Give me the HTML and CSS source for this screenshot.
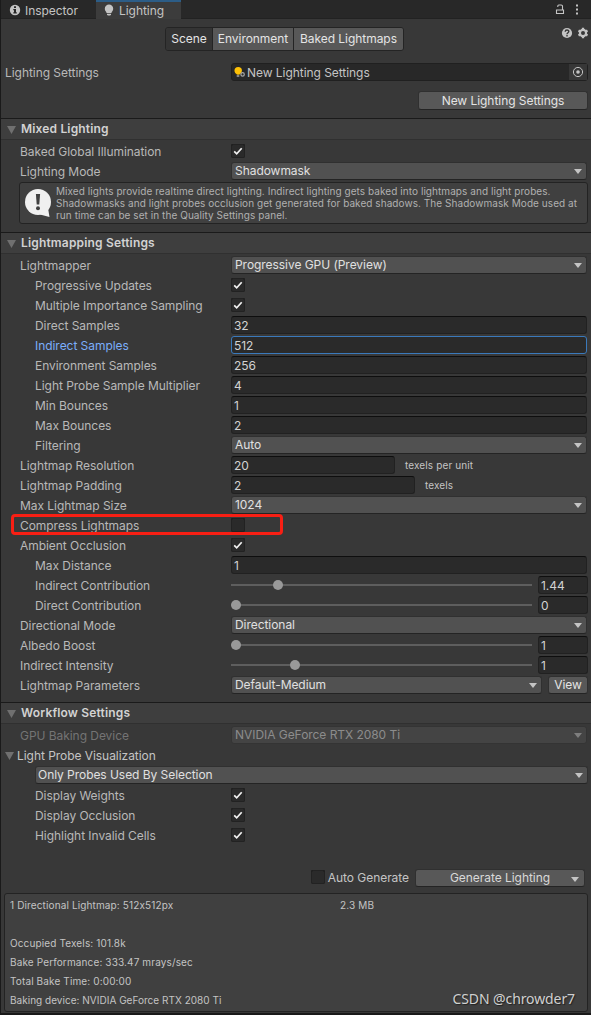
FILE: index.html
```html
<!DOCTYPE html>
<html lang="en">
<head>
    <meta charset="UTF-8">
    <meta name="viewport" content="width=device-width, initial-scale=1.0">
    <title>Lighting</title>
    <link rel="stylesheet" href="styles.css">
</head>
<body>
    <!-- shared checkmark -->
    <svg class="defs" width="0" height="0">
        <symbol id="check" viewBox="0 0 14 14">
            <path d="M3.2 7.3 L5.7 9.8 L10.7 4.2" fill="none" stroke="#f0f0f0" stroke-width="1.7"/>
        </symbol>
    </svg>

    <div class="window">
        <div class="tabs">
            <div class="tab">
                <svg width="12" height="12" viewBox="0 0 12 12"><circle cx="6" cy="6" r="5.2" fill="#c4c4c4"/><path d="M5 2.2h2v1.7H5zM4.3 5H7v3.3h.8v1.3H4.3V8.3H5V6.2h-.7z" fill="#282828"/></svg>
                <span>Inspector</span>
            </div>
            <div class="tab active">
                <svg width="12" height="12" viewBox="0 0 12 12"><path d="M6 .6a4.2 4.2 0 0 1 4.2 4.2c0 1.8-1.2 2.6-1.8 4.2H3.6C3 7.4 1.8 6.6 1.8 4.8A4.2 4.2 0 0 1 6 .6z" fill="#c4c4c4"/><path d="M4 9.8h4v.6l-.8 1.2H4.800L4 10.400z" fill="#c4c4c4"/></svg>
                <span>Lighting</span>
            </div>
            <div class="tab-tools">
                <svg width="10" height="11" viewBox="0 0 10 11"><path d="M1.5 6h7v3.500h-7z" fill="none" stroke="#c4c4c4" stroke-width="1.100"/><path d="M2.800 3V2q0-1 1-1h2.400q1.300 0 1.300 1v4" fill="none" stroke="#c4c4c4" stroke-width="1.100"/></svg>
                <svg width="4" height="11" viewBox="0 0 4 11"><path d="M1 .5h2v2H1zM1 4.500h2v2H1zM1 8.500h2v2H1z" fill="#c4c4c4"/></svg>
            </div>
        </div>

        <div class="toolbar">
            <div class="segments">
                <button class="segment selected">Scene</button>
                <button class="segment env">Environment</button>
                <button class="segment baked">Baked Lightmaps</button>
            </div>
            <div class="toolbar-icons">
                <svg width="12" height="12" viewBox="0 0 12 12"><circle cx="6" cy="6" r="5.100" fill="#c4c4c4"/><path d="M4.200 4.700C4.200 2.500 7.800 2.500 7.800 4.600 7.800 5.700 6 5.800 6 7.200M6 8v1.400" fill="none" stroke="#383838" stroke-width="1.400"/></svg>
                <svg width="12" height="12" viewBox="0 0 12 12"><circle cx="6" cy="6" r="3.100" fill="none" stroke="#c4c4c4" stroke-width="2.200"/><path d="M6 .8v2M6 9.200v2M1.500 3.400l1.700 1M8.800 7.600l1.700 1M1.500 8.600l1.700-1M8.800 4.400l1.700-1" stroke="#c4c4c4" stroke-width="2.300"/></svg>
            </div>
        </div>

        <div class="asset-row">
            <label class="label">Lighting Settings</label>
            <div class="object-field">
                <svg width="12" height="12" viewBox="0 0 12 12"><circle cx="4.200" cy="4.600" r="3.700" fill="#fec106"/><path d="M2.700 7h3v1.600h-3z" fill="#fec106"/><path d="M2.700 10h2.600" stroke="#c4c4c4" stroke-width="1.200"/><circle cx="8.600" cy="8.400" r="1.700" fill="none" stroke="#a8a8a8" stroke-width="1.200"/></svg>
                <span>New Lighting Settings</span>
                <div class="picker">
                    <svg width="12" height="12" viewBox="0 0 12 12"><circle cx="6" cy="6" r="4.600" fill="none" stroke="#c4c4c4"/><circle cx="6" cy="6" r="1.800" fill="#c4c4c4"/></svg>
                </div>
            </div>
        </div>
        <button class="btn new-settings">New Lighting Settings</button>

        <section class="section mixed">
            <h2><i class="fold"></i>Mixed Lighting</h2>
            <div class="row">
                <label class="label">Baked Global Illumination</label>
                <div class="checkbox"><svg width="14" height="14"><use href="#check"/></svg></div>
            </div>
            <div class="row">
                <label class="label">Lighting Mode</label>
                <div class="select">Shadowmask</div>
            </div>
            <div class="help-box">
                <svg width="28" height="30" viewBox="0 0 28 30"><path d="M14 2a13 13 0 1 1 0 26A13 13 0 0 1 14 2z" fill="#f0f0f0"/><path d="M16 27.500l9.500 2.500-1.500-9z" fill="#f0f0f0"/><path d="M11.900 7h4.200l-.8 10.500h-2.600z" fill="#404040"/><circle cx="14" cy="21.200" r="2" fill="#404040"/></svg>
                <p>Mixed lights provide realtime direct lighting. Indirect lighting gets baked into lightmaps and light probes.<br>Shadowmasks and light probes occlusion get generated for baked shadows. The Shadowmask Mode used at<br>run time can be set in the Quality Settings panel.</p>
            </div>
        </section>

        <section class="section lightmapping">
            <h2><i class="fold"></i>Lightmapping Settings</h2>
            <div class="row">
                <label class="label">Lightmapper</label>
                <div class="select">Progressive GPU (Preview)</div>
            </div>
            <div class="row indent">
                <label class="label">Progressive Updates</label>
                <div class="checkbox"><svg width="14" height="14"><use href="#check"/></svg></div>
            </div>
            <div class="row indent">
                <label class="label">Multiple Importance Sampling</label>
                <div class="checkbox"><svg width="14" height="14"><use href="#check"/></svg></div>
            </div>
            <div class="row indent">
                <label class="label">Direct Samples</label>
                <div class="field">32</div>
            </div>
            <div class="row indent focused">
                <label class="label">Indirect Samples</label>
                <div class="field">512</div>
            </div>
            <div class="row indent">
                <label class="label">Environment Samples</label>
                <div class="field">256</div>
            </div>
            <div class="row indent">
                <label class="label">Light Probe Sample Multiplier</label>
                <div class="field">4</div>
            </div>
            <div class="row indent">
                <label class="label">Min Bounces</label>
                <div class="field">1</div>
            </div>
            <div class="row indent">
                <label class="label">Max Bounces</label>
                <div class="field">2</div>
            </div>
            <div class="row indent">
                <label class="label">Filtering</label>
                <div class="select">Auto</div>
            </div>
            <div class="row">
                <label class="label">Lightmap Resolution</label>
                <div class="with-unit">
                    <div class="field resolution">20</div>
                    <span class="unit">texels per unit</span>
                </div>
            </div>
            <div class="row">
                <label class="label">Lightmap Padding</label>
                <div class="with-unit">
                    <div class="field padding">2</div>
                    <span class="unit">texels</span>
                </div>
            </div>
            <div class="row">
                <label class="label">Max Lightmap Size</label>
                <div class="select">1024</div>
            </div>
            <div class="row marked">
                <label class="label">Compress Lightmaps</label>
                <div class="checkbox"></div>
                <div class="marker"></div>
            </div>
            <div class="row">
                <label class="label">Ambient Occlusion</label>
                <div class="checkbox"><svg width="14" height="14"><use href="#check"/></svg></div>
            </div>
            <div class="row indent">
                <label class="label">Max Distance</label>
                <div class="field">1</div>
            </div>
            <div class="row indent">
                <label class="label">Indirect Contribution</label>
                <div class="slider-group">
                    <div class="slider"><i class="thumb" style="margin-left: 42px"></i></div>
                    <div class="field number">1.44</div>
                </div>
            </div>
            <div class="row indent">
                <label class="label">Direct Contribution</label>
                <div class="slider-group">
                    <div class="slider"><i class="thumb" style="margin-left: 0"></i></div>
                    <div class="field number">0</div>
                </div>
            </div>
            <div class="row">
                <label class="label">Directional Mode</label>
                <div class="select">Directional</div>
            </div>
            <div class="row">
                <label class="label">Albedo Boost</label>
                <div class="slider-group">
                    <div class="slider"><i class="thumb" style="margin-left: 0"></i></div>
                    <div class="field number">1</div>
                </div>
            </div>
            <div class="row">
                <label class="label">Indirect Intensity</label>
                <div class="slider-group">
                    <div class="slider"><i class="thumb" style="margin-left: 59px"></i></div>
                    <div class="field number">1</div>
                </div>
            </div>
            <div class="row">
                <label class="label">Lightmap Parameters</label>
                <div class="select-group">
                    <div class="select">Default-Medium</div>
                    <button class="btn view">View</button>
                </div>
            </div>
        </section>

        <section class="section workflow">
            <h2><i class="fold"></i>Workflow Settings</h2>
            <div class="row disabled">
                <label class="label">GPU Baking Device</label>
                <div class="select">NVIDIA GeForce RTX 2080 Ti</div>
            </div>
            <div class="foldout"><i class="fold"></i>Light Probe Visualization</div>
            <div class="wide-row">
                <div class="select">Only Probes Used By Selection</div>
            </div>
            <div class="row indent">
                <label class="label">Display Weights</label>
                <div class="checkbox"><svg width="14" height="14"><use href="#check"/></svg></div>
            </div>
            <div class="row indent">
                <label class="label">Display Occlusion</label>
                <div class="checkbox"><svg width="14" height="14"><use href="#check"/></svg></div>
            </div>
            <div class="row indent">
                <label class="label">Highlight Invalid Cells</label>
                <div class="checkbox"><svg width="14" height="14"><use href="#check"/></svg></div>
            </div>
        </section>

        <div class="generate">
            <div class="checkbox"></div>
            <span>Auto Generate</span>
            <button class="btn generate-btn">Generate Lighting</button>
        </div>

        <div class="stats">
            <div class="stats-line"><span class="stats-name">1 Directional Lightmap: 512x512px</span><span>2.3 MB</span></div>
            <div class="stats-line"></div>
            <div class="stats-line">Occupied Texels: 101.8k</div>
            <div class="stats-line">Bake Performance: 333.47 mrays/sec</div>
            <div class="stats-line">Total Bake Time: 0:00:00</div>
            <div class="stats-line device">Baking device: NVIDIA GeForce RTX 2080 Ti</div>
            <div class="watermark">CSDN @chrowder7</div>
        </div>
    </div>
</body>
</html>
```
FILE: styles.css
```css
:root {
    --bg: #383838;
    --header-bg: #3e3e3e;
    --field-bg: #2a2a2a;
    --select-bg: #515151;
    --button-bg: #585858;
    --line: #1a1a1a;
    --text: #c4c4c4;
    --label: #b8b8b8;
    --focus: #3a79bb;
}

* {
    margin: 0;
    padding: 0;
    box-sizing: border-box;
}

body {
    background-color: var(--bg);
    color: var(--text);
    font-family: Inter, sans-serif;
    font-size: 12px;
    letter-spacing: -0.05px;
    line-height: 18px;
    white-space: nowrap;
    overflow: hidden;
}

svg {
    display: block;
    flex: none;
}

.defs {
    position: absolute;
}

.window {
    width: 591px;
    height: 1015px;
    border-left: 1px solid var(--line);
    border-bottom: 2px solid #191919;
}

/* tabs */
.tabs {
    display: flex;
    height: 19px;
    background-color: #282828;
    border-bottom: 1px solid #222;
}

.tab {
    display: flex;
    align-items: center;
    gap: 4px;
    width: 95px;
    height: 19px;
    padding: 3px 0 0 8px;
}

.tab svg {
    margin-top: -2px;
}

.tab.active {
    width: 85px;
    padding-top: 1px;
    padding-left: 7px;
    border-top: 2px solid #2c5d87;
    background-color: #3c3c3c;
}

.tab-tools {
    display: flex;
    align-items: center;
    gap: 10px;
    margin-left: auto;
    padding-right: 12px;
}

/* scene / environment / baked switch */
.toolbar {
    display: flex;
    height: 44px;
    padding-top: 8px;
}

.segments {
    display: flex;
    height: 24px;
    margin-left: 164px;
    border: 1px solid #242424;
    border-radius: 3px;
    overflow: hidden;
}

.segment {
    border: none;
    background-color: var(--button-bg);
    color: #e4e4e4;
    font: inherit;
    letter-spacing: inherit;
}

.segment + .segment {
    border-left: 1px solid #242424;
}

.segment.selected {
    width: 46px;
    background-color: #343434;
}

.segment.env {
    width: 81px;
}

.segment.baked {
    width: 110px;
}

.toolbar-icons {
    display: flex;
    gap: 4px;
    margin-left: auto;
    padding-right: 2px;
}

/* asset */
.asset-row {
    display: grid;
    grid-template-columns: 230px 1fr;
    height: 28px;
    padding-right: 3px;
}

.asset-row .label {
    padding: 1px 0 0 4px;
}

.object-field {
    display: flex;
    align-items: center;
    gap: 1px;
    height: 18px;
    padding-left: 2px;
    border: 1px solid #202020;
    border-radius: 3px;
    background-color: #282828;
}

.object-field span {
    margin-top: 2px;
}

.picker {
    margin-left: auto;
    padding: 2px 3px;
    background-color: #373737;
}

.btn {
    height: 19px;
    border: 1px solid #303030;
    border-bottom-color: #242424;
    border-radius: 3px;
    background-color: var(--button-bg);
    color: #e4e4e4;
    font: inherit;
    letter-spacing: inherit;
    line-height: 17px;
}

.new-settings {
    display: block;
    width: 170px;
    margin: 0 3px 8px auto;
}

/* sections */
.section {
    border-top: 1px solid var(--line);
}

.section h2 {
    display: flex;
    align-items: center;
    height: 21px;
    margin-bottom: 1px;
    padding-left: 6px;
    border-bottom: 1px solid #303030;
    background-color: var(--header-bg);
    color: #d2d2d2;
    font-size: 12px;
    font-weight: 600;
    letter-spacing: 0.17px;
}

.mixed {
    height: 114px;
}

.lightmapping {
    height: 470px;
}

.workflow {
    height: 167px;
}

.fold {
    flex: none;
    width: 9px;
    height: 8px;
    margin-right: 5px;
    background-color: #707070;
    clip-path: polygon(0 0, 100% 0, 50% 100%);
}

.section h2 .fold {
    margin-top: 2px;
}

.row {
    display: grid;
    grid-template-columns: 230px 1fr;
    height: 20px;
    padding: 1px 4px 0 0;
}

.label {
    padding: 1px 0 0 19px;
    color: var(--label);
}

.indent .label {
    padding-left: 34px;
}

.checkbox {
    width: 14px;
    height: 14px;
    margin-top: 2px;
    border-radius: 2px;
    background-color: var(--field-bg);
    box-shadow: inset 0 0 0 1px #222, inset 0 1px 0 #111;
}

.field {
    height: 18px;
    padding-left: 2px;
    border: 1px solid #212121;
    border-top-color: #0e0e0e;
    border-radius: 3px;
    background-color: var(--field-bg);
    color: #d2d2d2;
}

.select {
    position: relative;
    height: 18px;
    padding-left: 3px;
    border: 1px solid #303030;
    border-bottom-color: #242424;
    border-radius: 3px;
    background-color: var(--select-bg);
    color: #e0e0e0;
    line-height: 16px;
}

.select::after,
.generate-btn::after {
    content: "";
    position: absolute;
    top: 6px;
    right: 4px;
    width: 8px;
    height: 5px;
    background-color: var(--text);
    clip-path: polygon(0 0, 100% 0, 50% 100%);
}

.focused .label {
    color: #7baefa;
}

.focused .field {
    border-color: var(--focus);
}

.disabled .label {
    color: #747474;
}

.disabled .select {
    border-color: #343434;
    background-color: #444;
    color: #8c8c8c;
}

.disabled .select::after {
    background-color: #7e7e7e;
}

.with-unit,
.select-group,
.slider-group {
    display: flex;
}

.resolution {
    width: 164px;
}

.padding {
    width: 184px;
}

.unit {
    margin-left: 10px;
    font-size: 10px;
    letter-spacing: 0.12px;
}

.slider-group {
    gap: 6px;
    margin-right: -1px;
}

.slider {
    flex: 1;
    height: 2px;
    margin-top: 8px;
    background-color: #5e5e5e;
}

.thumb {
    display: block;
    width: 10px;
    height: 10px;
    transform: translateY(-4px);
    border-radius: 50%;
    background-color: #999;
}

.number {
    width: 50px;
}

.select-group {
    gap: 6px;
    margin-right: -1px;
}

.select-group .select {
    flex: 1;
}

.view {
    width: 40px;
    height: 18px;
    line-height: 16px;
}

/* red highlight round the compress option */
.marked {
    position: relative;
}

.marker {
    position: absolute;
    top: -1px;
    left: 10px;
    width: 272px;
    height: 21px;
    border: 3px solid #f81f14;
    border-radius: 4px;
}

.help-box {
    display: flex;
    height: 42px;
    margin: 1px 3px 0 18px;
    padding: 4px 0 0 4px;
    border: 1px solid #232323;
    border-radius: 3px;
    background-color: #404040;
    color: #b0b0b0;
    font-size: 10px;
    letter-spacing: 0.06px;
    line-height: 12px;
}

.help-box p {
    margin-left: 4px;
    margin-top: -2px;
}

.foldout {
    display: flex;
    align-items: center;
    height: 20px;
    padding: 2px 0 0 4px;
}

.foldout .fold {
    margin-right: 3px;
}

.wide-row {
    height: 20px;
    padding: 1px 3px 0 34px;
}

.wide-row .select {
    padding-left: 2px;
}

/* footer */
.generate {
    display: flex;
    height: 24px;
    padding-right: 6px;
    justify-content: flex-end;
}

.generate .checkbox {
    margin: 1px 3px 0 0;
}

.generate-btn {
    position: relative;
    width: 170px;
    height: 18px;
    margin-left: 6px;
    color: #d8d8d8;
    line-height: 16px;
}

.generate-btn::after {
    top: 7px;
    right: 5px;
}

.stats {
    position: relative;
    height: 119px;
    margin: 0 3px;
    padding: 2px 5px;
    border: 1px solid #232323;
    border-radius: 3px;
    background-color: #404040;
    font-size: 10px;
    letter-spacing: 0.13px;
    line-height: 19px;
}

.stats-line {
    display: flex;
    height: 19px;
}

.stats-line.device {
    letter-spacing: 0.02px;
}

.stats-name {
    width: 330px;
}

.watermark {
    position: absolute;
    right: 12px;
    bottom: 3px;
    color: #d0d0d0;
    font-family: "Noto Sans", sans-serif;
    font-size: 14px;
    letter-spacing: -0.1px;
    text-shadow: 1px 1px 1px #222;
}
```
